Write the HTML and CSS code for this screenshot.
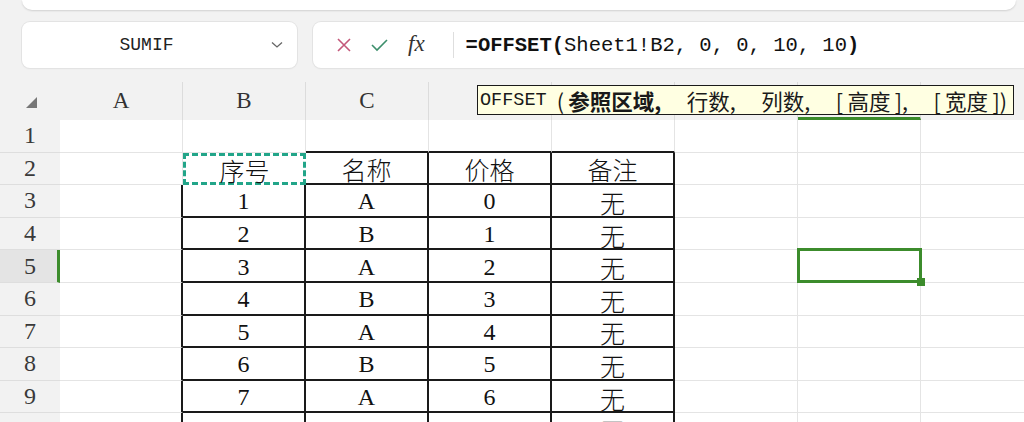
FILE: index.html
```html
<!DOCTYPE html>
<html lang="zh-CN">
<head>
    <meta charset="UTF-8">
    <title>OFFSET</title>
    <link rel="stylesheet" href="styles.css">
</head>
<body>
    <div class="top-strip"></div>

    <div class="toolbar">
        <div class="name-box">
            <span class="name-label">SUMIF</span>
            <svg class="chevron" width="12" height="8" viewBox="0 0 12 8"><path d="M1 1.5 L6 6 L11 1.5" fill="none" stroke="#666" stroke-width="1.3"/></svg>
        </div>
        <div class="formula-box">
            <svg class="fx-icon" width="14" height="14" viewBox="0 0 14 14"><path d="M1 1 L13 13 M13 1 L1 13" stroke="#c4587a" stroke-width="1.6" fill="none"/></svg>
            <svg class="fx-icon" width="17" height="13" viewBox="0 0 17 13"><path d="M1 6 L6 11 L16 1" stroke="#3d8f6c" stroke-width="1.6" fill="none"/></svg>
            <span class="fx-label">fx</span>
            <span class="fx-sep"></span>
            <span class="formula-text"><b>=OFFSET(</b>Sheet1!B2, 0, 0, 10, 10<b>)</b></span>
        </div>
    </div>

    <div class="sheet">
        <!-- column headers (D-G sit under the function hint) -->
        <div class="corner"><svg width="11" height="11" viewBox="0 0 11 11"><polygon points="11,0 11,11 0,11" fill="#777"/></svg></div>
        <div class="hd">A</div>
        <div class="hd">B</div>
        <div class="hd">C</div>
        <div class="hd"></div>
        <div class="hd"></div>
        <div class="hd"></div>
        <div class="hd on"></div>
        <div class="hd"></div>

        <!-- row 1 -->
        <div class="rh">1</div>
        <div class="c"></div>
        <div class="c"></div>
        <div class="c tp"></div>
        <div class="c tp"></div>
        <div class="c tp"></div>
        <div class="c"></div>
        <div class="c"></div>
        <div class="c"></div>

        <!-- row 2 -->
        <div class="rh">2</div>
        <div class="c"></div>
        <div class="c ants zh">序号</div>
        <div class="c t zh">名称</div>
        <div class="c t zh">价格</div>
        <div class="c t zh">备注</div>
        <div class="c"></div>
        <div class="c"></div>
        <div class="c"></div>

        <!-- row 3 -->
        <div class="rh">3</div>
        <div class="c lt"></div>
        <div class="c t">1</div>
        <div class="c t">A</div>
        <div class="c t">0</div>
        <div class="c t zh">无</div>
        <div class="c"></div>
        <div class="c"></div>
        <div class="c"></div>

        <!-- row 4 -->
        <div class="rh">4</div>
        <div class="c lt"></div>
        <div class="c t">2</div>
        <div class="c t">B</div>
        <div class="c t">1</div>
        <div class="c t zh">无</div>
        <div class="c"></div>
        <div class="c"></div>
        <div class="c"></div>

        <!-- row 5 -->
        <div class="rh on">5</div>
        <div class="c lt"></div>
        <div class="c t">3</div>
        <div class="c t">A</div>
        <div class="c t">2</div>
        <div class="c t zh">无</div>
        <div class="c"></div>
        <div class="c"></div>
        <div class="c"></div>

        <!-- row 6 -->
        <div class="rh">6</div>
        <div class="c lt"></div>
        <div class="c t">4</div>
        <div class="c t">B</div>
        <div class="c t">3</div>
        <div class="c t zh">无</div>
        <div class="c"></div>
        <div class="c"></div>
        <div class="c"></div>

        <!-- row 7 -->
        <div class="rh">7</div>
        <div class="c lt"></div>
        <div class="c t">5</div>
        <div class="c t">A</div>
        <div class="c t">4</div>
        <div class="c t zh">无</div>
        <div class="c"></div>
        <div class="c"></div>
        <div class="c"></div>

        <!-- row 8 -->
        <div class="rh">8</div>
        <div class="c lt"></div>
        <div class="c t">6</div>
        <div class="c t">B</div>
        <div class="c t">5</div>
        <div class="c t zh">无</div>
        <div class="c"></div>
        <div class="c"></div>
        <div class="c"></div>

        <!-- row 9 -->
        <div class="rh">9</div>
        <div class="c lt"></div>
        <div class="c t">7</div>
        <div class="c t">A</div>
        <div class="c t">6</div>
        <div class="c t zh">无</div>
        <div class="c"></div>
        <div class="c"></div>
        <div class="c"></div>

        <!-- row 10 -->
        <div class="rh">10</div>
        <div class="c lt"></div>
        <div class="c t">8</div>
        <div class="c t">B</div>
        <div class="c t">7</div>
        <div class="c t zh">无</div>
        <div class="c"></div>
        <div class="c"></div>
        <div class="c"></div>
    </div>

    <div class="tooltip">
        <span class="tip-fn">OFFSET</span>
        <span class="tip-args">
            <span>(&thinsp;<b>参照区域,</b></span>
            <span>行数,</span>
            <span>列数,</span>
            <span>[&thinsp;高度&thinsp;],</span>
            <span>[&thinsp;宽度&thinsp;])</span>
        </span>
    </div>

    <div class="selection"></div>
</body>
</html>
```

FILE: styles.css
```css
* {
    box-sizing: border-box;
}

html {
    overflow: hidden;
}

body {
    margin: 0;
    width: 1024px;
    height: 422px;
    overflow: hidden;
    position: relative;
    background: #f2f2f2;
    font-family: 'Liberation Mono', 'Noto Sans CJK SC', monospace;
    color: #1a1a1a;
}

.top-strip {
    height: 10px;
    margin: 0 8px 0 22px;
    background: #fff;
    border-radius: 0 0 10px 10px;
    box-shadow: 0 1px 2px rgba(0,0,0,0.14);
}

/* name box + formula bar */
.toolbar {
    display: flex;
    gap: 16px;
    height: 46px;
    margin-top: 12px;
    padding-left: 22px;
}

.name-box {
    flex: none;
    width: 275px;
    display: flex;
    align-items: center;
    padding-right: 14px;
    background: #fff;
    border-radius: 8px;
    box-shadow: 0 0 0 1px #e3e3e3, 0 1px 2px rgba(0,0,0,0.06);
}

.name-label {
    flex: 1;
    text-align: center;
    font-size: 18px;
    color: #222;
}

.formula-box {
    flex: 1;
    display: flex;
    align-items: center;
    gap: 20px;
    margin-right: -30px;
    padding-left: 24px;
    background: #fff;
    border-radius: 8px;
    box-shadow: 0 0 0 1px #e3e3e3, 0 1px 2px rgba(0,0,0,0.06);
}

.fx-icon {
    flex: none;
}

.fx-label {
    font-family: 'Liberation Serif', serif;
    font-style: italic;
    font-size: 23px;
    color: #333;
    margin-top: -3px;
}

.fx-sep {
    width: 1px;
    height: 26px;
    background: #dedede;
    margin-left: 8px;
    margin-right: -8px;
}

.formula-text {
    font-size: 20.5px;
    color: #111;
    white-space: nowrap;
}

/* grid */
.sheet {
    display: grid;
    grid-template-columns: 60px repeat(8, 123px);
    grid-template-rows: 38px repeat(10, 32.6px);
    height: 340px;
    overflow: hidden;
    margin-top: 14px;
    font-family: 'Liberation Serif', 'Noto Sans CJK SC', serif;
}

.corner {
    display: flex;
    align-items: center;
    justify-content: center;
    padding-left: 2px;
    padding-top: 2px;
}

.hd {
    display: flex;
    align-items: center;
    justify-content: center;
    font-size: 23px;
    color: #333;
    border-right: 1px solid #dcdcdc;
}

.hd.on {
    border-bottom: 3px solid #3c8c2c;
}

.rh {
    display: flex;
    align-items: center;
    justify-content: center;
    font-size: 24px;
    color: #3a3a3a;
    border-bottom: 1px solid #dedede;
}

.rh.on {
    background: #e4e4e4;
    border-right: 3px solid #3c8c2c;
    padding-left: 3px;
}

.c {
    display: flex;
    align-items: center;
    justify-content: center;
    background: #fff;
    border-right: 1px solid #e4e4e4;
    border-bottom: 1px solid #e4e4e4;
    font-size: 24px;
    line-height: 1;
    color: #111;
    padding-top: 2px;
}

.c.zh {
    font-family: 'Noto Sans CJK SC', sans-serif;
    font-size: 25px;
    font-weight: 300;
    padding-top: 4px;
}

.c.t {
    border-right: 2px solid #1a1a1a;
    border-bottom: 2px solid #1a1a1a;
}

.c.lt {
    border-right: 2px solid #1a1a1a;
}

.c.tp {
    border-bottom: 2px solid #1a1a1a;
}

.c.ants {
    border: 3px dashed #22a589;
}

/* function hint */
.tooltip {
    position: absolute;
    left: 477px;
    top: 85px;
    width: 537px;
    height: 30px;
    display: flex;
    align-items: center;
    padding: 0 6px 0 2px;
    background: #ffffe2;
    border: 1px solid #1a1a1a;
    white-space: nowrap;
    font-family: 'Noto Sans CJK SC', sans-serif;
    font-size: 21.5px;
}

.tip-fn {
    font-family: 'Liberation Mono', monospace;
    font-size: 18.5px;
    margin-right: 10px;
}

.tip-args {
    flex: 1;
    display: flex;
    justify-content: space-between;
}

/* active cell G5 */
.selection {
    position: absolute;
    left: 797px;
    top: 248px;
    width: 125px;
    height: 35px;
    border: 3px solid #3c8c2c;
}

.selection::after {
    content: '';
    position: absolute;
    right: -6px;
    bottom: -6px;
    width: 8px;
    height: 8px;
    background: #3c8c2c;
}
```
